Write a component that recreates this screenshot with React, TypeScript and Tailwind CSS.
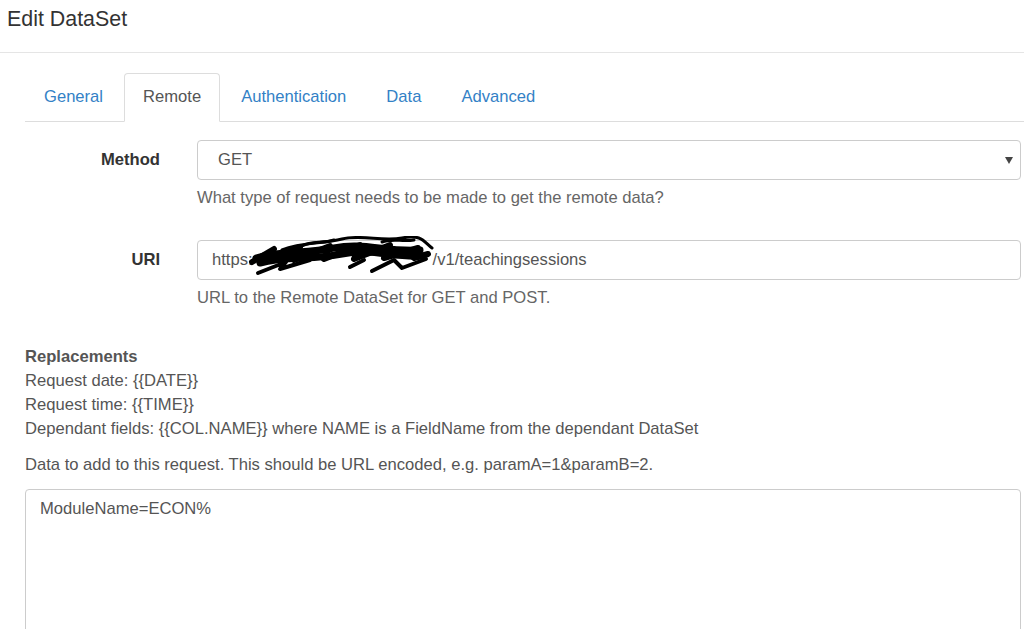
import React from "react";

const tabs = ["General", "Remote", "Authentication", "Data", "Advanced"];

function Scribble() {
  // redaction marker scribbled over the host name
  return (
    <svg
      className="absolute left-[44px] top-[-5px] pointer-events-none"
      width="196"
      height="40"
      viewBox="0 0 196 40"
      fill="none"
      stroke="#000"
      strokeLinecap="round"
      strokeLinejoin="round"
    >
      <path strokeWidth="3" d="M40,14 C60,6 80,8 100,3 S140,6 160,2 S182,6 190,12" />
      <path strokeWidth="6" d="M10,26 L32,13 L26,25 L58,11 L52,24 L88,10 L82,23 L118,9 L112,23 L148,9 L142,22 L176,12 L172,22 L186,18" />
      <path strokeWidth="7" d="M14,22 C40,14 62,18 92,12 S142,16 178,14" />
      <path strokeWidth="7" d="M18,27 C44,20 70,24 100,18 S150,22 180,20" />
      <path strokeWidth="4" d="M16,37 L44,26 L38,33 L68,24 M108,31 L122,24 M130,35 L152,24 L160,32 L184,23" />
      <path strokeWidth="3" d="M60,10 C70,4 80,8 92,4 M140,6 C150,2 160,6 172,4" />
    </svg>
  );
}

export default function App() {
  return (
    <div className="h-[629px] overflow-hidden bg-white text-[16.6px] text-[#555] font-['Liberation_Sans',Arial,sans-serif]">
      {/* Header */}
      <div className="h-[53px] border-b border-[#e5e5e5] px-[7px] pt-[7px] text-[21.4px] leading-[24px] text-[#333]">
        Edit DataSet
      </div>

      {/* Tabs */}
      <div className="pl-[25px] pt-[20px]">
        <ul className="flex border-b border-[#ddd]">
          {tabs.map((t) => {
            const active = t === "Remote";
            return (
              <li key={t} className="mr-[2px] -mb-px">
                <span
                  className={
                    active
                      ? "flex h-[49px] items-center rounded-t-[4px] border border-[#ddd] border-b-white bg-white px-[18px] text-[#555]"
                      : "flex h-[49px] items-center rounded-t-[4px] border border-transparent px-[18px] text-[#3381c6]"
                  }
                >
                  {t}
                </span>
              </li>
            );
          })}
        </ul>
      </div>

      {/* Form */}
      <div className="pl-[25px] pr-[3px] pt-[18px]">
        <div className="flex items-start">
          <label className="w-[172px] shrink-0 pr-[37px] text-right font-bold leading-[40px] text-[#333]">
            Method
          </label>
          <div className="flex-1">
            <div className="flex h-[40px] items-center justify-between rounded-[4px] border border-[#ccc] pl-[20px] pr-[7px] text-[#555]">
              <span>GET</span>
              <svg width="8" height="7" viewBox="0 0 8 7">
                <path d="M0,0 L8,0 L4,7 Z" fill="#444" />
              </svg>
            </div>
            <p className="mt-[6px] leading-[24px] text-[#666]">
              What type of request needs to be made to get the remote data?
            </p>
          </div>
        </div>

        <div className="mt-[30px] flex items-start">
          <label className="w-[172px] shrink-0 pr-[37px] text-right font-bold leading-[40px] text-[#333]">
            URI
          </label>
          <div className="flex-1">
            <div className="relative flex h-[40px] items-center rounded-[4px] border border-[#ccc] px-[14px] text-[#555]">
              <span>https:</span>
              <span className="inline-block w-[180px]" />
              <span>/v1/teachingsessions</span>
              <Scribble />
            </div>
            <p className="mt-[6px] leading-[24px] text-[#666]">
              URL to the Remote DataSet for GET and POST.
            </p>
          </div>
        </div>

        <div className="mt-[35px] leading-[24px]">
          <div className="font-bold">Replacements</div>
          <div>Request date: {"{{DATE}}"}</div>
          <div>Request time: {"{{TIME}}"}</div>
          <div>Dependant fields: {"{{COL.NAME}}"} where NAME is a FieldName from the dependant DataSet</div>
        </div>

        <p className="mt-[12px] leading-[24px]">
          Data to add to this request. This should be URL encoded, e.g. paramA=1&amp;paramB=2.
        </p>

        <div className="mt-[12px] h-[180px] rounded-[4px] border border-[#ccc] px-[14px] pt-[7px] leading-[24px] text-[#555]">
          ModuleName=ECON%
        </div>
      </div>
    </div>
  );
}
